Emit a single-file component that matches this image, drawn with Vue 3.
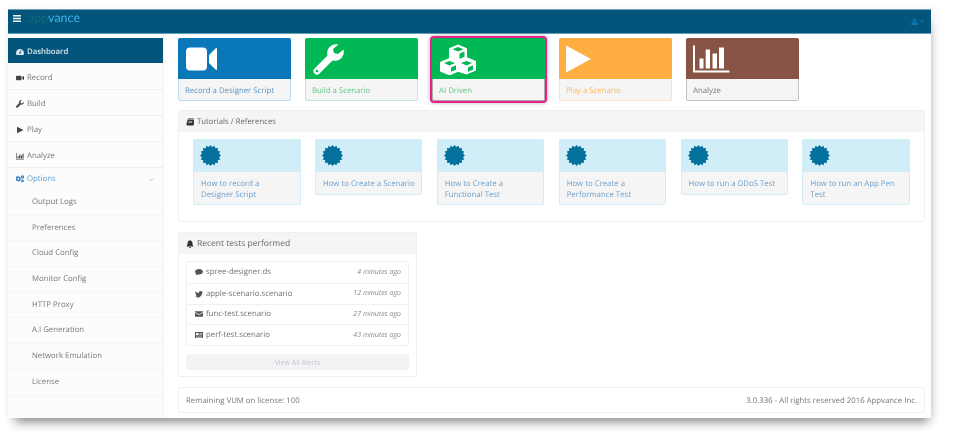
<template>
  <div class="page">
    <div class="shell">
      <div class="window">
        <header class="navbar">
          <div class="brand">
            <svg class="burger" viewBox="0 0 9 8"><path d="M0 0h9v1.6H0zM0 3.2h9v1.6H0zM0 6.4h9V8H0z" fill="#fff" /></svg>
            <span class="logo"><span class="logo-dark">app</span><span class="logo-light">vance</span></span>
          </div>
          <div class="user">
            <svg class="user-icon" viewBox="0 0 10 10"><circle cx="5" cy="2.8" r="2.6" /><path d="M0 10c0-3.4 1.6-4.8 2.8-4.8h4.4C8.4 5.2 10 6.6 10 10z" /></svg>
            <svg class="user-caret" viewBox="0 0 6 4"><path d="M0 0h6L3 3.4z" /></svg>
          </div>
        </header>

        <div class="body">
          <aside class="sidebar">
            <a v-for="item in navItems" :key="item.label" class="nav-item" :class="{ active: item.active }">
              <svg class="nav-icon" viewBox="0 0 16 16"><path :d="icons[item.icon]" /></svg>
              {{ item.label }}
            </a>
            <div class="nav-options">
              <svg class="nav-icon" viewBox="0 0 16 16"><path :d="icons.cogs" /></svg>
              <span>Options</span>
              <svg class="options-caret" viewBox="0 0 8 5"><path d="M1 1l3 3 3-3" /></svg>
            </div>
            <a v-for="sub in subItems" :key="sub" class="nav-sub">{{ sub }}</a>
          </aside>

          <main class="main">
            <section class="actions">
              <div v-for="card in actionCards" :key="card.label" class="action" :class="[card.kind, { selected: card.selected }]">
                <div class="action-top">
                  <svg class="action-icon" viewBox="0 0 40 32"><path :d="card.icon" fill-rule="evenodd" /></svg>
                </div>
                <div class="action-label">{{ card.label }}</div>
              </div>
            </section>

            <section class="panel">
              <h3 class="panel-head">
                <svg class="head-icon" viewBox="0 0 16 16"><path :d="icons.book" /></svg>
                Tutorials / References
              </h3>
              <div class="tiles">
                <div v-for="tile in tutorials" :key="tile" class="tile">
                  <div class="tile-top">
                    <svg class="badge" viewBox="0 0 24 24"><polygon :points="badgePoints" /></svg>
                  </div>
                  <div class="tile-label">{{ tile }}</div>
                </div>
              </div>
            </section>

            <section class="panel recent">
              <h3 class="panel-head">
                <svg class="head-icon" viewBox="0 0 16 16"><path :d="icons.bell" /></svg>
                <span class="recent-title">Recent tests performed</span>
              </h3>
              <div class="recent-body">
                <ul class="tests">
                  <li v-for="test in recentTests" :key="test.name">
                    <svg class="test-icon" viewBox="0 0 16 16"><path :d="icons[test.icon]" /></svg>
                    <span class="test-name">{{ test.name }}</span>
                    <em>{{ test.time }}</em>
                  </li>
                </ul>
                <button class="view-all">View All Alerts</button>
              </div>
            </section>

            <footer class="footer">
              <span>Remaining VUM on license: 100</span>
              <span>3.0.336 - All rights reserved 2016 Appvance Inc.</span>
            </footer>
          </main>
        </div>
      </div>
    </div>
  </div>
</template>

<script setup>
const icons = {
  dashboard: 'M8 2C3.6 2 0 5.6 0 10c0 1.5.4 2.9 1.1 4h13.8c.7-1.1 1.1-2.5 1.1-4 0-4.4-3.6-8-8-8zM7 9l3-5 .8.4L9 9.600a1.500 1.500 0 1 1-2-.6z',
  video: 'M1.500 3.500h8A1.500 1.500 0 0 1 11 5v6a1.500 1.500 0 0 1-1.500 1.500h-8A1.500 1.500 0 0 1 0 11V5a1.500 1.500 0 0 1 1.500-1.500zM12 7l4-3.500v9L12 9z',
  wrench: 'M15.500 4.200l-3 3-2.700-.9-.9-2.700 3-3C9.500-.2 7.300.6 6.500 2.500c-.5 1.100-.4 2.400.1 3.400L.6 12c-.8.8-.8 2 0 2.800s2 .8 2.800 0l6.100-6c1 .5 2.300.6 3.400.1 1.900-.8 3.400-2.800 2.600-4.700z',
  play: 'M2 1.500l13 6.500-13 6.500z',
  chart: 'M0 2h1.200v11.800H16V15H0zM3 8.500h2.300V13H3zM6.300 5h2.300v8H6.300zM9.600 7h2.300v6H9.600zM12.900 3.500h2.300V13h-2.300z',
  cogs: 'M5.500 3.500l1.300.5 1.200-.7 1 1-.7 1.200.5 1.300 1.300.4v1.500l-1.300.3-.5 1.300.7 1.200-1 1-1.200-.7-1.300.5L5.200 13H3.700l-.3-1.300-1.300-.5-1.200.7-1-1 .7-1.200-.5-1.300L-1 8.100V6.600l1.100-.4.5-1.300-.7-1.200 1-1 1.200.7 1.300-.5.3-1.300h1.500zM4.500 5.300a2 2 0 1 0 0 4 2 2 0 0 0 0-4zM13 .5l1 .7 1.200-.1.300 1.200 1 .7-.5 1.100.5 1.100-1 .7-.3 1.200-1.200-.1-1 .7-1-.7-1.200.1-.3-1.200-1-.7.5-1.100-.5-1.100 1-.7.3-1.200 1.200.1zM13 3a1.100 1.100 0 1 0 0 2.200A1.100 1.100 0 0 0 13 3zM13 9l.8.6 1-.1.200 1 .9.600-.4.900.4.900-.9.600-.2 1-1-.1-.8.600-.8-.6-1 .1-.2-1-.9-.6.400-.9-.4-.9.900-.6.200-1 1 .1zM13 11.300a.9.900 0 1 0 0 1.800.9.900 0 0 0 0-1.800z',
  book: 'M4 1h11.500l-.5 2H4.800c-.8 0-1 1-.2 1H15l.8-.5v9L15 15H3C1 15 .5 13 1 11.500zM5 6v1h7.500V6zM4.500 8.500v1h7.500v-1z',
  bell: 'M8 0a1.200 1.200 0 0 1 1.200 1.400C11.500 2 13 4 13 6.500c0 4 1 5 2.500 6.500H.5C2 11.500 3 10.500 3 6.500 3 4 4.500 2 6.800 1.400A1.200 1.200 0 0 1 8 0zM6 14h4a2 2 0 0 1-4 0z',
  comment: 'M8 2c4.400 0 8 2.400 8 5.500S12.400 13 8 13c-.7 0-1.400-.1-2-.2C5 13.800 3.400 14.500 1.500 14.500c.8-.8 1.300-1.800 1.400-2.900C1.100 10.600 0 9.100 0 7.500 0 4.400 3.600 2 8 2z',
  twitter: 'M16 3.500c-.6.3-1.200.4-1.900.5.700-.4 1.200-1 1.400-1.800-.6.4-1.300.7-2.100.8a3.300 3.300 0 0 0-5.600 3C5 5.900 2.600 4.600 1.100 2.600c-.9 1.500-.4 3.400 1 4.400-.5 0-1-.2-1.500-.4 0 1.600 1.100 3 2.600 3.300-.5.1-1 .1-1.500 0 .4 1.300 1.600 2.200 3.100 2.300A6.600 6.600 0 0 1 0 13.500 9.300 9.300 0 0 0 14.400 5.200c.6-.4 1.200-1 1.600-1.700z',
  envelope: 'M.5 2.500h15c.3 0 .5.200.5.500v1L8 8.500 0 4V3c0-.3.200-.5.500-.5zM0 5.500l8 4.500 8-4.500V13c0 .3-.2.500-.5.500H.5A.5.500 0 0 1 0 13z',
  news: 'M0 2h16v12H0zM2 4v4h5V4zM9 4v1h5V4zM9 6.500v1h5v-1zM2 9.500v1h12v-1zM2 12v.800h12V12z'
}

const navItems = [
  { label: 'Dashboard', icon: 'dashboard', active: true },
  { label: 'Record', icon: 'video' },
  { label: 'Build', icon: 'wrench' },
  { label: 'Play', icon: 'play' },
  { label: 'Analyze', icon: 'chart' }
]

const subItems = ['Output Logs', 'Preferences', 'Cloud Config', 'Monitor Config', 'HTTP Proxy', 'A.I Generation', 'Network Emulation', 'License']

const actionCards = [
  {
    label: 'Record a Designer Script',
    kind: 'blue',
    icon: 'M5 4.500h13a4 4 0 0 1 4 4v15a4 4 0 0 1-4 4H5a4 4 0 0 1-4-4v-15a4 4 0 0 1 4-4zM24 12l6.500-6.500c.8-.7 1.500-.4 1.500.5v20c0 .9-.7 1.200-1.500.5L24 20z'
  },
  {
    label: 'Build a Scenario',
    kind: 'green',
    icon: 'M26.500 1.500A9 9 0 0 0 15.500 12.500L2.500 25.500a3.500 3.500 0 0 0 5 5L20.500 17.500A9 9 0 0 0 31.500 6.500L26 11l-4-1-1-4zM5 26.700a1.300 1.300 0 1 0 .01 0z'
  },
  {
    label: 'AI Driven',
    kind: 'green',
    selected: true,
    icon: 'M19 1.500l9 3.800v9l9 3.800v9.500l-9.500 3.900L19 28.700l-8.500 3.800L1 28.600v-9.500l9-3.800v-10zM19 4l-5.500 2.200L19 8.500l5.500-2.300zM20.500 10.600v5.400l5-2.200V8.500zM10.500 18l-5.500 2.100 5.500 2.300 5.500-2.300zM27.500 18L22 20.100l5.500 2.300 5.500-2.300zM12 24.400v4.400l5-2.100v-4.400zM29 24.400v4.400l5-2.100v-4.400z'
  },
  { label: 'Play a Scenario', kind: 'orange', icon: 'M0 2.500L25 16 0 29.500z' },
  {
    label: 'Analyze',
    kind: 'brown',
    icon: 'M0 2.500h2V27.500h34.500v2H0zM6.500 15.500h4v10h-4zM12.700 6.500H17v19h-4.300zM19.500 10.500H24v15h-4.500zM26 4.500h5v21h-5z'
  }
]

const tutorials = [
  'How to record a Designer Script',
  'How to Create a Scenario',
  'How to Create a Functional Test',
  'How to Create a Performance Test',
  'How to run a DDoS Test',
  'How to run an App Pen Test'
]

const recentTests = [
  { name: 'spree-designer.ds', time: '4 minutes ago', icon: 'comment' },
  { name: 'apple-scenario.scenario', time: '12 minutes ago', icon: 'twitter' },
  { name: 'func-test.scenario', time: '27 minutes ago', icon: 'envelope' },
  { name: 'perf-test.scenario', time: '43 minutes ago', icon: 'news' }
]

// starburst badge used on the tutorial tiles
const badgePoints = Array.from({ length: 32 }, (_, i) => {
  const r = i % 2 ? 10 : 12
  const a = (i * Math.PI) / 16
  return `${(12 + r * Math.cos(a)).toFixed(2)},${(12 + r * Math.sin(a)).toFixed(2)}`
}).join(' ')
</script>

<style>
html, body {
  background: #fff;
}
</style>

<style scoped>
.page {
  height: 444px;
  box-sizing: border-box;
  padding: 9px 0 0 8px;
  background: #fff;
  overflow: hidden;
}

.shell {
  width: 923px;
  height: 409px;
  box-shadow: 2px 9px 10px -5px rgba(0, 0, 0, 0.45), 3px 0 10px rgba(0, 0, 0, 0.06);
  font-family: "Open Sans", sans-serif;
  font-size: 7.8px;
  color: #666;
  text-rendering: geometricPrecision;
}

.window {
  height: 100%;
  background: #fff;
  filter: blur(0.5px);
}

.navbar {
  height: 25px;
  background: #03557c;
  border-top: 1px solid #6fa3bc;
  border-bottom: 1px solid #5f9db8;
  box-sizing: border-box;
  display: flex;
  justify-content: space-between;
  align-items: center;
  padding: 0 7px 0 5px;
}

.brand {
  display: flex;
  align-items: center;
  gap: 7px;
  margin-top: -7px;
}

.burger {
  width: 8px;
  height: 7px;
}

.logo {
  font-family: "Lato", sans-serif;
  font-size: 12.5px;
  line-height: 14px;
}

.logo-dark {
  color: #0e6c78;
}

.logo-light {
  color: #3cb3ea;
}

.user {
  display: flex;
  align-items: center;
  gap: 2px;
}

.user-icon {
  width: 7px;
  height: 7px;
  fill: #0c76ad;
}

.user-caret {
  width: 4px;
  height: 3px;
  fill: #0c76ad;
}

.body {
  display: flex;
  height: 384px;
}

.sidebar {
  width: 155px;
  padding-top: 4px;
  background: #fcfcfc;
  border-right: 1px solid #f1f1f1;
  flex-shrink: 0;
}

.nav-item {
  height: 25px;
  box-sizing: border-box;
  padding: 2px 0 0 8px;
  margin-bottom: 1px;
  display: flex;
  align-items: center;
  gap: 3px;
  box-shadow: 0 1px 0 #efefef;
  color: #777;
}

.nav-item.active {
  background: #03557c;
  color: #d9e6ec;
  font-weight: 600;
  box-shadow: none;
}

.nav-icon {
  width: 8px;
  height: 8px;
  fill: #444;
  flex-shrink: 0;
}

.nav-item.active .nav-icon {
  fill: #dce8ee;
}

.nav-options {
  height: 21px;
  padding: 1px 8px 0;
  box-sizing: border-box;
  display: flex;
  align-items: center;
  gap: 3px;
  color: #5b9bd0;
}

.nav-options .nav-icon {
  fill: #337ab7;
}

.options-caret {
  width: 5px;
  height: 3px;
  margin-left: auto;
  margin-right: 1px;
  fill: none;
  stroke: #9db2bf;
  stroke-width: 1.2;
}

.nav-sub {
  height: 25.7px;
  display: flex;
  align-items: center;
  padding-left: 24px;
  box-shadow: 0 1px 0 #f6f6f6;
  color: #777;
}

.main {
  flex: 1;
  padding: 4px 6px 0 14px;
  min-width: 0;
}

.actions {
  display: flex;
  gap: 14.5px;
  height: 63px;
}

.action {
  width: 112.5px;
  height: 63px;
  box-sizing: border-box;
  border: 1px solid;
  border-radius: 2px;
  background: #f5f5f5;
  display: flex;
  flex-direction: column;
}

.action-top {
  height: 41px;
  flex-shrink: 0;
  margin: -1px -1px 0;
  border-radius: 2px 2px 0 0;
  display: flex;
  align-items: center;
  padding-left: 7px;
}

.action-icon {
  width: 40px;
  height: 32px;
  fill: #fff;
}

.action-label {
  padding: 6px 6px 0;
  line-height: 12px;
}

.blue {
  border-color: #bcdcf0;
  color: #5a94c4;
}
.blue .action-top {
  background: #0a77b8;
}

.green {
  border-color: #b9ebcb;
  color: #62c585;
}
.green .action-top {
  background: #00b854;
}

.orange {
  border-color: #fde2bb;
  color: #fcb458;
}
.orange .action-top {
  background: #ffae42;
}

.brown {
  border-color: #c2c2c2;
  color: #777;
}
.brown .action-top {
  background: #875445;
}

.selected {
  outline: 2px solid #e8218a;
  box-shadow: 0 0 4px 2px rgba(0, 0, 0, 0.3);
  border-color: #aaa;
}

.panel {
  margin-top: 9px;
  border: 1px solid #f0f0f0;
  border-radius: 2px;
}

.panel-head {
  margin: 0;
  height: 21px;
  padding-left: 7px;
  display: flex;
  align-items: center;
  gap: 3px;
  background: #f5f5f5;
  font-size: 7.8px;
  font-weight: 400;
  color: #666;
}

.recent-title {
  font-size: 8.5px;
}

.head-icon {
  width: 8px;
  height: 8px;
  fill: #333;
}

.tiles {
  display: grid;
  grid-template-columns: repeat(6, 1fr);
  gap: 14.3px;
  align-items: start;
  padding: 7px 14px 16px;
}

.tile {
  border: 1px solid #d2edf7;
  border-radius: 2px;
  background: #f5f5f5;
}

.tile-top {
  height: 33px;
  margin: -1px -1px 0;
  background: #d0edf8;
  border-radius: 2px 2px 0 0;
  display: flex;
  align-items: center;
  padding-left: 7px;
}

.badge {
  width: 21px;
  height: 21px;
  fill: #03719c;
}

.tile-label {
  padding: 7px 6px 4px 7px;
  line-height: 10.5px;
  color: #6d9ec9;
}

.recent {
  width: 239px;
  box-sizing: border-box;
  margin-top: 10px;
  height: 145px;
}

.recent-body {
  padding: 7px 7px 0;
}

.tests {
  margin: 0;
  padding: 0;
  list-style: none;
  border: 1px solid #f0f0f0;
  border-radius: 2px;
}

.tests li {
  height: 20.8px;
  box-sizing: border-box;
  display: flex;
  align-items: center;
  padding: 0 7px 0 8px;
  gap: 3px;
  border-top: 1px solid #f0f0f0;
}

.tests li:first-child {
  border-top: 0;
}

.test-icon {
  width: 8px;
  height: 8px;
  fill: #555;
  flex-shrink: 0;
}

.test-name {
  flex: 1;
  color: #707070;
}

.tests em {
  font-size: 7px;
  color: #8a8a8a;
}

.view-all {
  display: block;
  width: 100%;
  height: 16px;
  margin-top: 8px;
  padding: 0;
  border: 0;
  border-radius: 2px;
  background: #f2f3f5;
  font-family: inherit;
  font-size: 7px;
  color: #c5c7cc;
}

.footer {
  margin-top: 10px;
  height: 26px;
  box-sizing: border-box;
  border: 1px solid #f0f0f0;
  border-radius: 2px;
  display: flex;
  justify-content: space-between;
  align-items: center;
  padding: 1px 7px 0;
  color: #777;
}
</style>
